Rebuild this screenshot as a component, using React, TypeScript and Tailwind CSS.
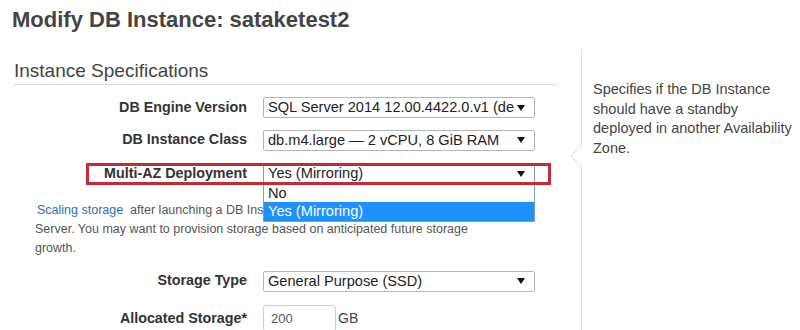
import React from "react";

const Arrow = () => (
  <svg width="8" height="7" viewBox="0 0 8 7" className="absolute right-[9px] top-1/2 -translate-y-1/2">
    <polygon points="0,0.5 8,0.5 4,6.5" fill="#111" />
  </svg>
);

function FakeSelect({ value, open = false }: { value: string; open?: boolean }) {
  return (
    <div
      className={`relative h-[21px] w-[272px] rounded-[2px] border bg-white pl-[4px] text-[14.6px] leading-[19px] text-[#222] whitespace-nowrap overflow-visible ${
        open ? "border-[#7f9dc9]" : "border-[#b5b5b5]"
      }`}
    >
      <div className="w-[246px] overflow-hidden">{value}</div>
      <Arrow />
    </div>
  );
}

function Row({ label, children, mt }: { label: string; children: React.ReactNode; mt: string }) {
  return (
    <div className={`flex items-center ${mt}`}>
      <div className="w-[234px] text-right text-[14.3px] font-bold text-[#333]">{label}</div>
      <div className="ml-[16px] relative">{children}</div>
    </div>
  );
}

export default function App() {
  return (
    <div
      className="relative w-[800px] h-[330px] overflow-hidden bg-white"
      style={{ fontFamily: '"Liberation Sans", Arial, sans-serif' }}
    >
      <h1 className="pl-[12px] pt-[7px] text-[22px] leading-[25px] font-bold text-[#444]">
        Modify DB Instance: sataketest2
      </h1>
      <div className="mt-[18px] flex h-[280px]">
        <div className="relative w-[581px] pl-[13px] pr-[24px]">
          <div className="border-b border-[#d8d8d8] pt-[10px] pb-[2px]">
            <h2 className="pl-[1px] text-[19px] leading-[22px] text-[#444]">Instance Specifications</h2>
          </div>

          <Row label="DB Engine Version" mt="mt-[12px]">
            <FakeSelect value="SQL Server 2014 12.00.4422.0.v1 (default)" />
          </Row>
          <Row label="DB Instance Class" mt="mt-[11px]">
            <FakeSelect value="db.m4.large — 2 vCPU, 8 GiB RAM" />
          </Row>
          <div className="relative mt-[12px]">
            <Row label="Multi-AZ Deployment" mt="mt-0">
              <FakeSelect value="Yes (Mirroring)" open />
              <div className="absolute left-0 top-[20px] z-20 w-[272px] border border-[#7f9dc9] bg-white text-[14.6px] text-[#222]">
                <div className="h-[18px] pl-[4px] leading-[18px]">No</div>
                <div className="h-[19px] bg-[#1e90ff] pl-[4px] leading-[19px] text-white">Yes (Mirroring)</div>
              </div>
            </Row>
            <div className="pointer-events-none absolute left-[73px] top-0 z-30 h-[22px] w-[465px] border-[3px] border-[#c42b33]" />
          </div>

          <p className="mt-[17px] pl-[22px] text-[12.5px] leading-[19px] text-[#555]">
            <span className="pl-[2px] text-[#2a72ad]">Scaling storage</span>
            &nbsp; after launching a DB Instance is not supported for SQL
            <br />
            Server. You may want to provision storage based on anticipated future storage
            <br />
            growth.
          </p>

          <Row label="Storage Type" mt="mt-[12px]">
            <FakeSelect value="General Purpose (SSD)" />
          </Row>
          <div className="mt-[13px] flex items-center">
            <div className="w-[234px] text-right text-[14.3px] font-bold text-[#333]">Allocated Storage*</div>
            <div className="ml-[16px] flex items-center">
              <div className="h-[27px] w-[73px] rounded-[3px] border border-[#cfcfcf] bg-white pl-[7px] text-[13px] leading-[25px] text-[#555]">
                200
              </div>
              <span className="ml-[2px] text-[14px] text-[#444]">GB</span>
            </div>
          </div>
        </div>

        <div className="relative flex-1 border-l border-[#dcdcdc] pl-[11px] pt-[30px]">
          <svg
            width="12"
            height="22"
            viewBox="0 0 12 22"
            className="absolute left-[-12px] top-[95px]"
          >
            <polygon points="12,0 1,11 12,22" fill="#fff" />
            <polyline points="12,0 1,11 12,22" fill="none" stroke="#dcdcdc" strokeWidth="1" />
          </svg>
          <p className="text-[14.5px] leading-[19.5px] text-[#444]">
            Specifies if the DB Instance
            <br />
            should have a standby
            <br />
            deployed in another Availability
            <br />
            Zone.
          </p>
        </div>
      </div>
    </div>
  );
}
